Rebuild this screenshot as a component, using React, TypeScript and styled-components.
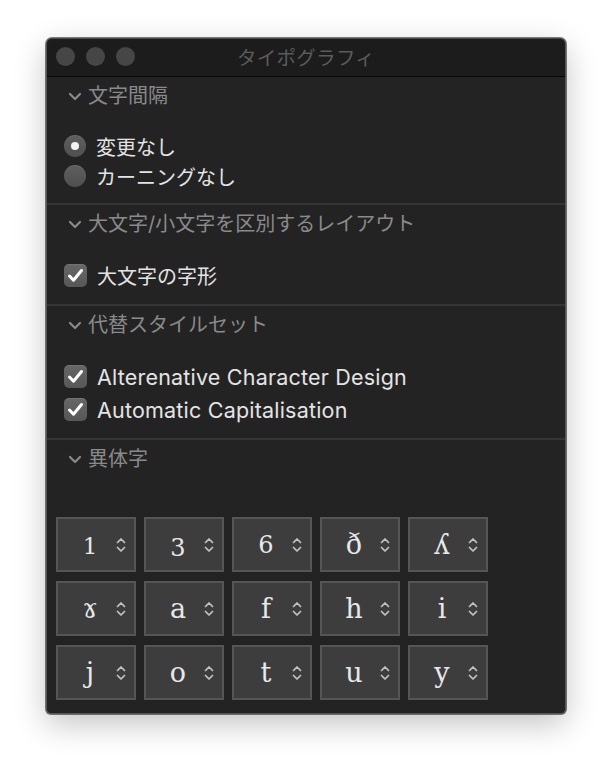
import React from "react";
import styled, { createGlobalStyle } from "styled-components";

const GlobalStyle = createGlobalStyle`
  html, body {
    margin: 0;
    padding: 0;
    background: #ffffff;
  }
  body {
    font-family: "Inter", "Noto Sans CJK JP", sans-serif;
  }
`;

const StPage = styled.div`
  width: 612px;
  height: 770px;
  box-sizing: border-box;
  padding: 38px 0 0 46px;
`;

const StWindow = styled.div`
  width: 520px;
  box-sizing: border-box;
  background: #232323;
  border: 1px solid #555;
  border-top-color: #4a4a4a;
  border-radius: 6px 6px 5px 5px;
  overflow: hidden;
  box-shadow: 0 10px 32px rgba(0, 0, 0, 0.24), 0 0 0 1px rgba(0, 0, 0, 0.5);
`;

const StTitleBar = styled.div`
  position: relative;
  height: 38px;
  box-sizing: border-box;
  padding: 0 0 2px 9px;
  background: #1c1c1c;
  border-bottom: 1px solid #070707;
  display: flex;
  align-items: center;
  gap: 11px;
`;

const StLight = styled.span`
  width: 19px;
  height: 19px;
  border-radius: 50%;
  background: #464646;
`;

const StTitle = styled.div`
  position: absolute;
  left: 0;
  right: 0;
  top: 0;
  bottom: 2px;
  display: flex;
  align-items: center;
  justify-content: center;
  color: #5b5b5b;
  font-size: 19.5px;
  letter-spacing: 0.3px;
  pointer-events: none;
`;

const StSection = styled.section<{ $last?: boolean }>`
  padding: 8px 0 ${(p) => (p.$last ? "13px" : "12px")} 0;
  border-bottom: ${(p) => (p.$last ? "none" : "2px solid #353535")};
`;

const StHeader = styled.div`
  height: 22px;
  display: flex;
  align-items: center;
  padding-left: 21px;
  gap: 6px;
  color: #8a8a8a;
  font-size: 20px;
  line-height: 22px;
`;

const StItems = styled.div`
  margin-top: 24px;
  padding-left: 17px;
  display: flex;
  flex-direction: column;
`;

const StItem = styled.div<{ $h: number }>`
  height: ${(p) => p.$h}px;
  display: flex;
  align-items: center;
  gap: 10px;
  color: #e4e4e4;
  font-size: 20px;
`;

const StLabel = styled.span<{ $latin?: boolean }>`
  font-size: ${(p) => (p.$latin ? "21.5px" : "20px")};
  letter-spacing: ${(p) => (p.$latin ? "0.2px" : "0")};
`;

const StRadio = styled.span<{ $on?: boolean }>`
  width: 22px;
  height: 22px;
  border-radius: 50%;
  background: linear-gradient(#5f5f5f, #4f4f4f);
  box-shadow: inset 0 1px 0 rgba(255, 255, 255, 0.08);
  display: flex;
  align-items: center;
  justify-content: center;
  &::after {
    content: "";
    display: ${(p) => (p.$on ? "block" : "none")};
    width: 8px;
    height: 8px;
    border-radius: 50%;
    background: #f2f2f2;
  }
`;

const StCheck = styled.span`
  width: 23px;
  height: 23px;
  border-radius: 5px;
  background: linear-gradient(#676767, #575757);
  box-shadow: inset 0 1px 0 rgba(255, 255, 255, 0.08);
  display: flex;
  align-items: center;
  justify-content: center;
`;

const StGrid = styled.div`
  margin-top: 47px;
  padding-left: 9px;
  display: grid;
  grid-template-columns: repeat(5, 80px);
  grid-auto-rows: 55px;
  column-gap: 8px;
  row-gap: 9px;
`;

const StCell = styled.div`
  box-sizing: border-box;
  background: #3d3d3d;
  border: 2px solid #555;
  display: grid;
  grid-template-columns: 52px 10px;
  padding-left: 6px;
  align-items: center;
`;

const StGlyph = styled.span<{ $size: number; $drop: number }>`
  text-align: center;
  color: #e8e8e8;
  font-family: "DejaVu Serif", "Liberation Serif", serif;
  font-size: ${(p) => p.$size}px;
  line-height: 51px;
  position: relative;
  top: ${(p) => p.$drop}px;
`;

const Chevron = () => (
  <svg width="14" height="9" viewBox="0 0 14 9">
    <path
      d="M2 2 L7 7 L12 2"
      fill="none"
      stroke="#8a8a8a"
      strokeWidth="2.2"
      strokeLinecap="round"
      strokeLinejoin="round"
    />
  </svg>
);

const Tick = () => (
  <svg width="17" height="15" viewBox="0 0 17 15">
    <path
      d="M2.5 8 L6.5 12.2 L14.5 2.5"
      fill="none"
      stroke="#ffffff"
      strokeWidth="3"
      strokeLinecap="round"
      strokeLinejoin="round"
    />
  </svg>
);

const Stepper = () => (
  <svg width="10" height="18" viewBox="0 0 10 18">
    <g
      fill="none"
      stroke="#c4c4c4"
      strokeWidth="1.7"
      strokeLinecap="round"
      strokeLinejoin="round"
    >
      <path d="M1.5 6.5 L5 3 L8.5 6.5" />
      <path d="M1.5 11.5 L5 15 L8.5 11.5" />
    </g>
  </svg>
);

// old-style figures are faked with a smaller size and a drop
const glyphs: { g: string; size: number; drop: number }[] = [
  { g: "1", size: 23, drop: 2 },
  { g: "3", size: 24, drop: 4 },
  { g: "6", size: 24, drop: 1 },
  { g: "ð", size: 27, drop: 0 },
  { g: "ʎ", size: 27, drop: 0 },
  { g: "ɤ", size: 27, drop: 0 },
  { g: "a", size: 27, drop: 0 },
  { g: "f", size: 27, drop: 0 },
  { g: "h", size: 27, drop: 0 },
  { g: "i", size: 27, drop: 0 },
  { g: "j", size: 27, drop: 0 },
  { g: "o", size: 27, drop: 0 },
  { g: "t", size: 27, drop: 0 },
  { g: "u", size: 27, drop: 0 },
  { g: "y", size: 27, drop: 0 },
];

const Header: React.FC<{ children: React.ReactNode }> = ({ children }) => (
  <StHeader>
    <Chevron />
    <span>{children}</span>
  </StHeader>
);

export default function App() {
  return (
    <StPage>
      <GlobalStyle />
      <StWindow>
        <StTitleBar>
          <StLight />
          <StLight />
          <StLight />
          <StTitle>タイポグラフィ</StTitle>
        </StTitleBar>

        <StSection>
          <Header>文字間隔</Header>
          <StItems>
            <StItem $h={30}>
              <StRadio $on />
              <StLabel>変更なし</StLabel>
            </StItem>
            <StItem $h={30}>
              <StRadio />
              <StLabel>カーニングなし</StLabel>
            </StItem>
          </StItems>
        </StSection>

        <StSection>
          <Header>大文字/小文字を区別するレイアウト</Header>
          <StItems>
            <StItem $h={33}>
              <StCheck>
                <Tick />
              </StCheck>
              <StLabel>大文字の字形</StLabel>
            </StItem>
          </StItems>
        </StSection>

        <StSection>
          <Header>代替スタイルセット</Header>
          <StItems>
            <StItem $h={33}>
              <StCheck>
                <Tick />
              </StCheck>
              <StLabel $latin>Alterenative Character Design</StLabel>
            </StItem>
            <StItem $h={33}>
              <StCheck>
                <Tick />
              </StCheck>
              <StLabel $latin>Automatic Capitalisation</StLabel>
            </StItem>
          </StItems>
        </StSection>

        <StSection $last>
          <Header>異体字</Header>
          <StGrid>
            {glyphs.map((item, i) => (
              <StCell key={i}>
                <StGlyph $size={item.size} $drop={item.drop}>
                  {item.g}
                </StGlyph>
                <Stepper />
              </StCell>
            ))}
          </StGrid>
        </StSection>
      </StWindow>
    </StPage>
  );
}
